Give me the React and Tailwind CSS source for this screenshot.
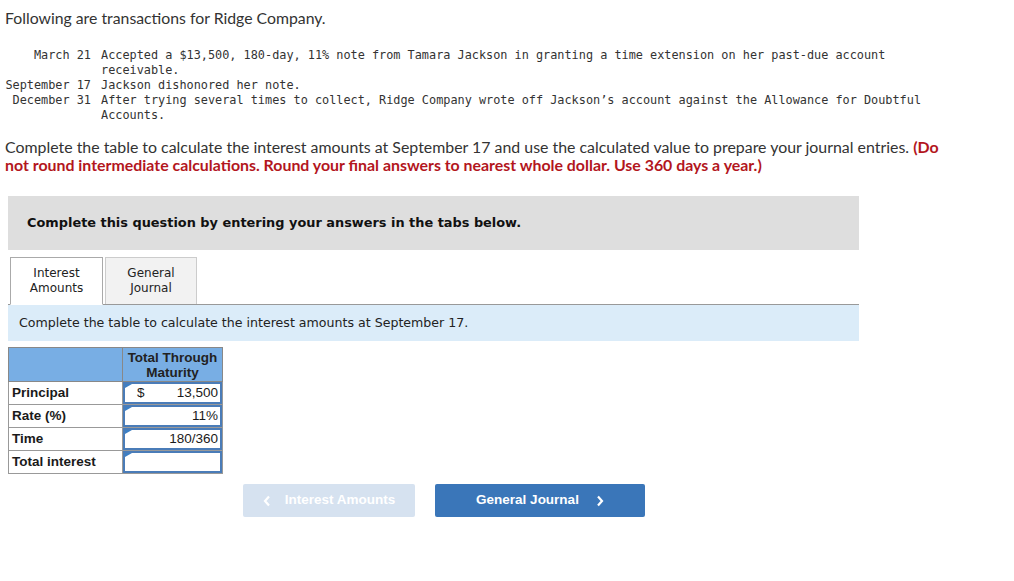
import React from 'react';

const rows = [
    { date: 'March 21', text: 'Accepted a $13,500, 180-day, 11% note from Tamara Jackson in granting a time extension on her past-due account receivable.' },
    { date: 'September 17', text: 'Jackson dishonored her note.' },
    { date: 'December 31', text: 'After trying several times to collect, Ridge Company wrote off Jackson\u2019s account against the Allowance for Doubtful Accounts.' },
];

const tableRows = [
    { label: 'Principal', dollar: true, value: '13,500' },
    { label: 'Rate (%)', value: '11%' },
    { label: 'Time', value: '180/360' },
    { label: 'Total interest', value: '' },
];

const Flag = () => (
    <span className="absolute left-0 top-0 w-0 h-0 border-t-[4px] border-t-[#3c7fc4] border-r-[7px] border-r-transparent border-b-[4px] border-b-transparent"></span>
);

const App = () => {
    return (
        <div className="bg-white w-[1014px] h-[581px] text-[#333] pt-[9px]">
            <p className="px-[5px] text-[15.8px] leading-[18px] font-['Lato','Liberation_Sans',sans-serif]">Following are transactions for Ridge Company.</p>

            <table className="mt-[21px] font-['DejaVu_Sans_Mono',monospace] text-[11.85px] leading-[15px] text-[#333] border-collapse">
                <tbody>
                    {rows.map(r => (
                        <tr key={r.date} className="align-top">
                            <td className="w-[91px] pl-[5px] text-right whitespace-nowrap">{r.date}</td>
                            <td className="pl-[10px] w-[850px]">{r.text}</td>
                        </tr>
                    ))}
                </tbody>
            </table>

            <p className="mt-[15px] px-[5px] w-[955px] text-[15.9px] leading-[17.5px] font-['Lato','Liberation_Sans',sans-serif]">
                Complete the table to calculate the interest amounts at September 17 and use the calculated value to prepare your journal entries. <span className="font-bold text-[#b3161d]">(Do not round intermediate calculations. Round your final answers to nearest whole dollar. Use 360 days a year.)</span>
            </p>

            <div className="ml-[8px] w-[851px] mt-[23px]">
                <div className="bg-[#dedede] h-[54px] flex items-center pl-[19px]">
                    <span className="font-['DejaVu_Sans',sans-serif] font-bold text-[12.9px] text-[#111]">Complete this question by entering your answers in the tabs below.</span>
                </div>

                <div className="mt-[7px] flex items-end gap-[2px] pl-[2px] border-b border-[#999] font-['DejaVu_Sans',sans-serif] text-[12px] leading-[15px] text-[#222]">
                    <div className="w-[93px] h-[48px] -mb-px bg-white border border-[#aaa] border-b-white flex items-center justify-center text-center">
                        Interest<br />Amounts
                    </div>
                    <div className="w-[92px] h-[47px] bg-[#f2f2f2] border border-[#ccc] border-b-0 flex items-center justify-center text-center">
                        General<br />Journal
                    </div>
                </div>

                <div className="bg-[#dbecf9] h-[36px] flex items-center pl-[11px] font-['DejaVu_Sans',sans-serif] text-[12.6px] text-[#222]">
                    Complete the table to calculate the interest amounts at September 17.
                </div>

                <table className="mt-[6px] border-collapse font-['Liberation_Sans',sans-serif] text-[13.5px] text-[#1a1a1a]">
                    <thead>
                        <tr className="bg-[#78aee4]">
                            <th className="w-[114px] h-[34px] border border-[#888]"></th>
                            <th className="w-[100px] border border-[#888] font-bold text-[13.5px] leading-[15px] text-[#222]">Total Through<br />Maturity</th>
                        </tr>
                    </thead>
                    <tbody>
                        {tableRows.map(r => (
                            <tr key={r.label}>
                                <td className="h-[23px] border border-[#999] pl-[3px] font-bold text-[#1a1a1a]">{r.label}</td>
                                <td className="border border-[#999] p-0">
                                    <div className="relative h-[22px] border-2 border-[#4a7cb8] flex items-center justify-between pr-[2px] pl-[12px]">
                                        <Flag />
                                        <span>{r.dollar ? '$' : ''}</span>
                                        <span>{r.value}</span>
                                    </div>
                                </td>
                            </tr>
                        ))}
                    </tbody>
                </table>
            </div>

            <div className="mt-[10px] flex gap-[20px] pl-[243px] font-['Liberation_Sans',sans-serif] font-bold text-[13.5px]">
                <button className="w-[172px] h-[33px] rounded-[2px] bg-[#d6e2f0] text-white flex items-center justify-center gap-[14px]">
                    <svg width="8" height="12" viewBox="0 0 8 12"><path d="M6 1.5 L2 6 L6 10.5" fill="none" stroke="white" strokeWidth="2.2" /></svg>
                    <span>Interest Amounts</span>
                </button>
                <button className="w-[210px] h-[33px] rounded-[2px] bg-[#3a76b9] text-white flex items-center justify-center gap-[17px]">
                    <span>General Journal</span>
                    <svg width="8" height="12" viewBox="0 0 8 12"><path d="M2 1.5 L6 6 L2 10.5" fill="none" stroke="white" strokeWidth="2.2" /></svg>
                </button>
            </div>
        </div>
    );
};

export default App;
